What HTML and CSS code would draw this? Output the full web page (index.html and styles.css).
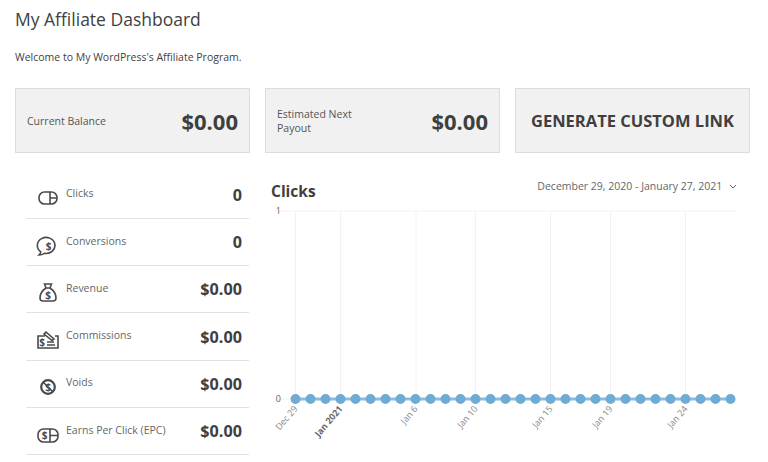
FILE: index.html
```html
<!DOCTYPE html>
<html>
<head>
    <title>My Affiliate Dashboard</title>
    <link rel="stylesheet" href="styles.css">
</head>
<body>
    <div class="container">
        <h1>My Affiliate Dashboard</h1>
        <p class="welcome">Welcome to My WordPress's Affiliate Program.</p>

        <div class="cards">
            <div class="card">
                <span class="card-label">Current Balance</span>
                <span class="card-value">$0.00</span>
            </div>
            <div class="card">
                <span class="card-label">Estimated Next Payout</span>
                <span class="card-value">$0.00</span>
            </div>
            <a class="card card-link" href="#">GENERATE CUSTOM LINK</a>
        </div>

        <div class="main">
            <div class="stats">
                <div class="stat">
                    <svg class="stat-icon" viewBox="0 0 24 20">
                        <rect x="3" y="4" width="18" height="12" rx="5.5"/>
                        <path d="M14 4v12M14 10h7"/>
                    </svg>
                    <span class="stat-label">Clicks</span>
                    <span class="stat-value">0</span>
                </div>
                <div class="stat">
                    <svg class="stat-icon" viewBox="0 0 24 20">
                        <path d="M3 19c1.200-1 1.800-2 1.800-3.200A8.800 8 0 1 1 8.500 17.300C7 18.300 5 19 3 19z"/>
                        <text class="icon-text" x="12.500" y="13.500">$</text>
                    </svg>
                    <span class="stat-label">Conversions</span>
                    <span class="stat-value">0</span>
                </div>
                <div class="stat">
                    <svg class="stat-icon" viewBox="0 0 24 20">
                        <path d="M8.500 1h7l-1.500 4h-4zM10 5h4M10 5c-3 2-6 6-6 10 0 2 1 3 3 3h10c2 0 3-1 3-3 0-4-3-8-6-10"/>
                        <text class="icon-text" x="12" y="15.500">$</text>
                    </svg>
                    <span class="stat-label">Revenue</span>
                    <span class="stat-value">$0.00</span>
                </div>
                <div class="stat">
                    <svg class="stat-icon" viewBox="0 0 24 20">
                        <path d="M9 6H2v12h20V6h-3M10 2l8 7-2 1.500-8-6.500z"/>
                        <path d="M11 12h7M11 15h8"/>
                        <text class="icon-text" x="6" y="15.500">$</text>
                    </svg>
                    <span class="stat-label">Commissions</span>
                    <span class="stat-value">$0.00</span>
                </div>
                <div class="stat">
                    <svg class="stat-icon" viewBox="0 0 24 20">
                        <circle class="void-ring" cx="12" cy="10" r="6.800"/>
                        <path d="M7 5l10 10"/>
                        <text class="icon-text" x="12" y="13.500">$</text>
                    </svg>
                    <span class="stat-label">Voids</span>
                    <span class="stat-value">$0.00</span>
                </div>
                <div class="stat">
                    <svg class="stat-icon" viewBox="0 0 24 20">
                        <rect x="2" y="4" width="20" height="13" rx="5.500"/>
                        <path d="M14 4v13M14 10.500h8"/>
                        <text class="icon-text" x="8.500" y="14">$</text>
                    </svg>
                    <span class="stat-label">Earns Per Click (EPC)</span>
                    <span class="stat-value">$0.00</span>
                </div>
            </div>

            <div class="chart-box">
                <div class="chart-head">
                    <h2>Clicks</h2>
                    <span class="date-range">December 29, 2020 - January 27, 2021
                        <svg class="chevron" viewBox="0 0 8 5"><path d="M1 1l3 3 3-3"/></svg>
                    </span>
                </div>
                <svg class="chart" width="483" height="258" viewBox="265 204 483 258">
                    <g class="grid">
                        <path d="M295.500 211V399M340.500 211V399M416 211V399M475.500 211V399M550.500 211V399M610.500 211V399M685.500 211V399"/>
                        <path d="M275 211H736M275 399H736"/>
                    </g>
                    <text class="axis-y" x="281" y="214">1</text>
                    <text class="axis-y" x="281" y="402">0</text>
                    <g class="axis-x">
                        <text transform="translate(298 409) rotate(-50)">Dec 29</text>
                        <text class="axis-bold" transform="translate(343 409) rotate(-50)">Jan 2021</text>
                        <text transform="translate(418 409) rotate(-50)">Jan 6</text>
                        <text transform="translate(478 409) rotate(-50)">Jan 10</text>
                        <text transform="translate(553 409) rotate(-50)">Jan 15</text>
                        <text transform="translate(613 409) rotate(-50)">Jan 19</text>
                        <text transform="translate(688 409) rotate(-50)">Jan 24</text>
                    </g>
                    <path class="line" d="M295.500 399H731"/>
                    <path class="dots" d="M295.500 399H731"/>
                </svg>
            </div>
        </div>
    </div>
</body>
</html>
```
FILE: styles.css
```css
body {
    margin: 0;
    background: #fff;
    color: #3f3f3f;
    font-family: "Open Sans", sans-serif;
    overflow: hidden;
}
.container { padding: 0 18px 0 15px; }
h1 {
    margin: 0;
    padding-top: 7px;
    font-size: 17.500px;
    line-height: 24px;
    font-weight: 400;
}
.welcome {
    margin: 18px 0 0;
    font-size: 10.500px;
    line-height: 16px;
}
.cards {
    display: flex;
    gap: 15px;
    margin-top: 23px;
}
.card {
    flex: 1;
    height: 65px;
    box-sizing: border-box;
    display: flex;
    align-items: center;
    justify-content: space-between;
    padding: 0 11px;
    background: #f1f1f1;
    border: 1px solid #dcdcdc;
}
.card-label {
    width: 90px;
    font-size: 10.500px;
    line-height: 14px;
    color: #555;
}
.card-value {
    font-size: 22px;
    font-weight: 700;
}
.card-link {
    justify-content: center;
    color: #3f3f3f;
    font-size: 16.500px;
    font-weight: 700;
    text-decoration: none;
    white-space: nowrap;
}
.main {
    display: flex;
    margin-top: 18px;
}
.stats {
    width: 223px;
    margin: 0.600px 0 0 11px;
}
.stat {
    display: flex;
    align-items: center;
    height: 47.300px;
    box-sizing: border-box;
    border-bottom: 1px solid #e2e2e2;
    padding-right: 7px;
}
.stat-icon {
    width: 24px;
    height: 20px;
    margin: 7px 6px 0 10px;
    flex-shrink: 0;
    fill: none;
    stroke: #4a4a4a;
    stroke-width: 1.600;
}
.void-ring { stroke-width: 2.200; }
.icon-text {
    fill: #4a4a4a;
    stroke: none;
    font-size: 10px;
    font-weight: 700;
    text-anchor: middle;
}
.stat-label {
    flex: 1;
    margin-top: -3px;
    font-size: 10.500px;
    color: #666;
}
.stat-value {
    font-size: 16.200px;
    font-weight: 700;
}
.chart-box {
    flex: 1;
    margin-left: 16px;
    min-width: 0;
}
.chart-head {
    display: flex;
    justify-content: space-between;
    padding: 9px 13px 0 6px;
    height: 24px;
}
h2 {
    margin: 0;
    font-size: 15.500px;
    line-height: 22px;
    font-weight: 700;
}
.date-range {
    margin-top: -2px;
    font-size: 10.500px;
    line-height: 16px;
    color: #666;
}
.chevron {
    width: 8px;
    height: 5px;
    margin: 0 0 1px 4px;
    fill: none;
    stroke: #666;
}
.chart { display: block; }
.grid path {
    fill: none;
    stroke: #f2f2f2;
    stroke-width: 1;
}
.axis-y {
    fill: #666;
    font-size: 9px;
    text-anchor: end;
}
.axis-x text {
    fill: #888;
    font-size: 9px;
    text-anchor: end;
}
.axis-x .axis-bold {
    fill: #666;
    font-weight: 700;
}
.line {
    stroke: #8dbcdc;
    stroke-width: 3;
}
.dots {
    fill: none;
    stroke: #6fabd3;
    stroke-width: 10;
    stroke-linecap: round;
    stroke-dasharray: 0 15;
}
```
